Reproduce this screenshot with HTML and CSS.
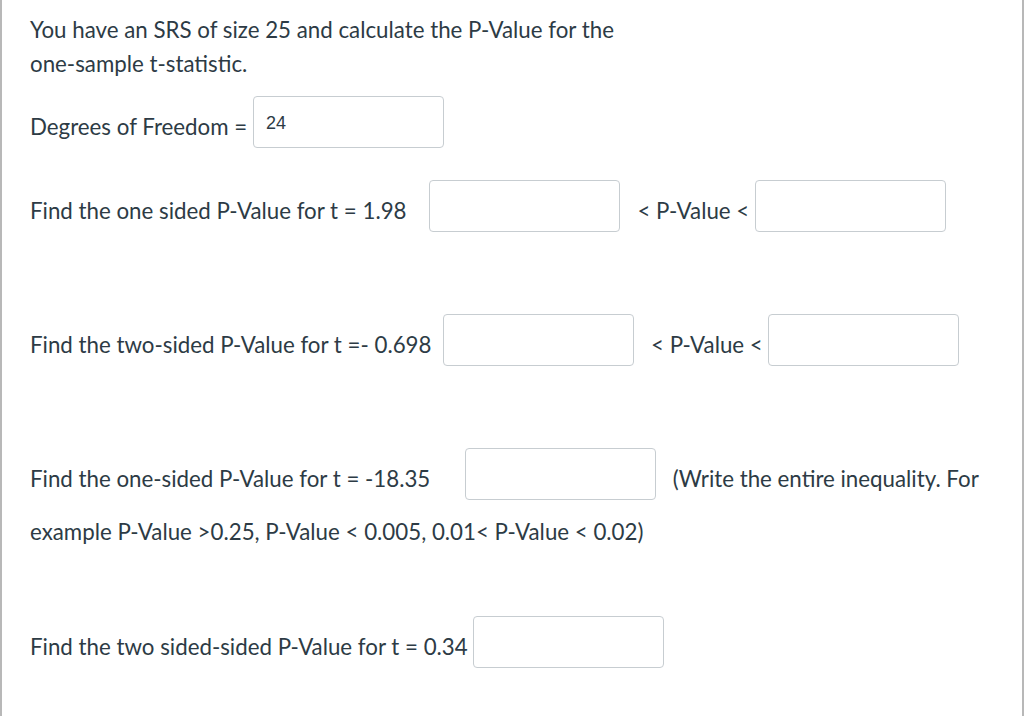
FILE: index.html
```html
<!DOCTYPE html>
<html lang="en">
<head>
<meta charset="utf-8">
<title>One-sample t-statistic</title>
<link rel="stylesheet" href="styles.css">
</head>
<body>
<div class="question">
  <p class="intro">You have an SRS of size 25 and calculate the P-Value for the<br>one-sample t-statistic.</p>
  <p class="row near">Degrees of Freedom = <input class="answer" type="text" value="24"></p>
  <p class="row near second">Find the one sided P-Value for t = 1.98&nbsp;&nbsp;&nbsp; <input class="answer" type="text">&nbsp;&nbsp; &lt; P-Value &lt; <input class="answer" type="text"></p>
  <p class="row far">Find the two-sided P-Value for t =- 0.698&nbsp; <input class="answer" type="text">&nbsp;&nbsp; &lt; P-Value &lt; <input class="answer" type="text"></p>
  <p class="row far">Find the one-sided P-Value for t = -18.35&nbsp;&nbsp;&nbsp;&nbsp;&nbsp; <input class="answer" type="text">&nbsp;&nbsp; (Write the entire inequality. For example P-Value &gt;0.25, P-Value &lt; 0.005, 0.01&lt; P-Value &lt; 0.02)</p>
  <p class="row far">Find the two sided-sided P-Value for t = 0.34 <input class="answer" type="text"></p>
</div>
</body>
</html>
```

FILE: styles.css
```css
html, body {
  margin: 0;
  padding: 0;
  background: #ffffff;
}

.question {
  box-sizing: border-box;
  width: 1024px;
  height: 716px;
  padding: 13px 30px 0 28px;
  border-left: 2px solid #b8b8b8;
  border-right: 2px solid #b8b8b8;
  font-family: Lato, "Open Sans", sans-serif;
  font-size: 22.3px;
  line-height: 34px;
  color: #2d3b45;
}

.question p {
  margin: 0;
}

.row.near {
  margin-top: 15px;
}

.row.near.second {
  margin-top: 17px;
}

.row.far {
  margin-top: 67px;
}

.answer {
  box-sizing: border-box;
  width: 191px;
  height: 52px;
  margin: 0 0 15px 0;
  padding: 3px 12px 0;
  border: 1px solid #c7cdd1;
  border-radius: 4px;
  background: #ffffff;
  vertical-align: middle;
  font-family: "Liberation Sans", Arial, sans-serif;
  font-size: 18px;
  color: #2d3b45;
  outline: none;
}
```
